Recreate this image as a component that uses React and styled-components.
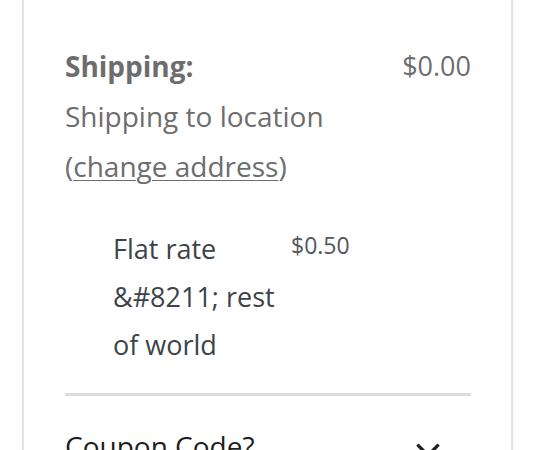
import React from 'react';
import styled, { createGlobalStyle } from 'styled-components';

const GlobalStyle = createGlobalStyle`
    body {
        margin: 0;
        background: #fff;
        font-family: "Open Sans", "Noto Sans", sans-serif;
    }
`;

const Page = styled.div`
    height: 450px;
    overflow: hidden;
`;

const Card = styled.div`
    margin: 0 21px 0 22px;
    min-height: 600px;
    border-left: 2px solid #e4e4e8;
    border-right: 2px solid #e4e4e8;
    box-shadow: 0 0 1px #d8d8dc;
    padding: 41px 40px 0 41px;
`;

const ShippingRow = styled.div`
    display: flex;
    justify-content: space-between;
    align-items: flex-start;
    color: #6d6d6d;
    font-size: 28px;
    line-height: 50px;
`;

const Label = styled.strong`
    display: block;
    font-weight: 700;
`;

const Price = styled.span`
    font-size: 27px;
`;

const ChangeLink = styled.a`
    color: inherit;
    text-decoration: underline;
    text-underline-offset: 3px;
    text-decoration-thickness: 1px;
`;

const Rates = styled.ul`
    list-style: none;
    margin: 34px 0 0;
    padding: 0 0 0 48px;
`;

const Rate = styled.li`
    display: flex;
    align-items: flex-start;
`;

const RateName = styled.span`
    width: 178px;
    color: #3c434a;
    font-size: 27px;
    line-height: 48px;
`;

const RatePrice = styled.span`
    color: #50575e;
    font-size: 23px;
    line-height: 40px;
`;

const Divider = styled.hr`
    border: none;
    height: 3px;
    background: #dcdcde;
    margin: 24px 0 0;
`;

const Coupon = styled.div`
    display: flex;
    justify-content: space-between;
    align-items: flex-start;
    padding: 34px 28px 0 0;
    color: #1e1e1e;
    font-size: 28px;
    line-height: 32px;
`;

const ChevronIcon = styled.svg`
    margin-top: 4px;
`;

const Chevron = () => (
    <ChevronIcon width="30" height="30" viewBox="0 0 24 24" fill="none" stroke="#1e1e1e" strokeWidth="2.6">
        <path d="M3.5 8.5l8.5 8.5 8.5-8.5" />
    </ChevronIcon>
);

export default function App() {
    return (
        <Page>
            <GlobalStyle />
            <Card>
                <ShippingRow>
                    <div>
                        <Label>Shipping:</Label>
                        <div>Shipping to location</div>
                        <div>
                            (<ChangeLink href="#">change address</ChangeLink>)
                        </div>
                    </div>
                    <Price>$0.00</Price>
                </ShippingRow>
                <Rates>
                    <Rate>
                        <RateName>Flat rate &amp;#8211; rest of world</RateName>
                        <RatePrice>$0.50</RatePrice>
                    </Rate>
                </Rates>
                <Divider />
                <Coupon>
                    <span>Coupon Code?</span>
                    <Chevron />
                </Coupon>
            </Card>
        </Page>
    );
}
